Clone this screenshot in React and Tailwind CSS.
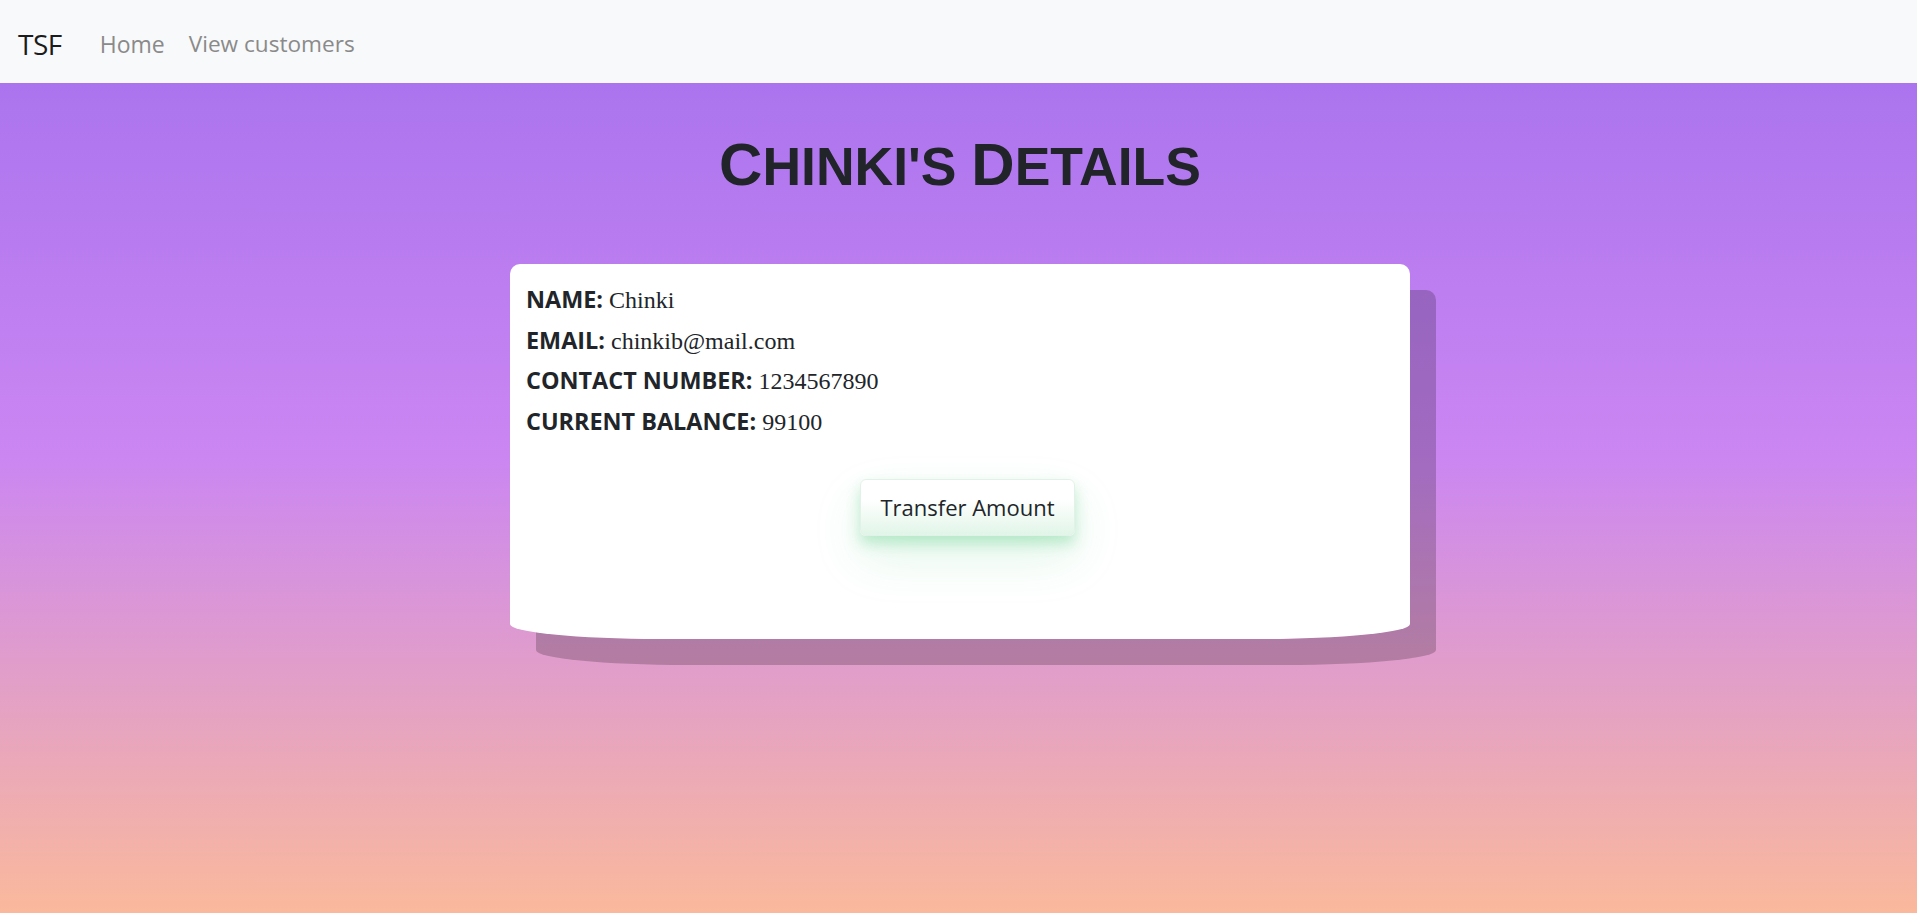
export default function App() {
  const sans = { fontFamily: '"Open Sans", "Noto Sans", sans-serif' };
  const serif = { fontFamily: '"Liberation Serif", "Times New Roman", serif' };
  return (
    <div className="w-[1917px] min-h-[913px] flex flex-col" style={sans}>
      <nav className="h-[83px] bg-[#f8f9fa] flex items-center pl-[18px] pt-[5px]">
        <span className="text-[28px] text-[#1c1c1c] tracking-[-0.5px] leading-none">TSF</span>
        <span className="ml-[38px] text-[23px] text-[#8a8a8a] leading-none">Home</span>
        <span className="ml-[24px] text-[22.6px] text-[#8a8a8a] leading-none">View customers</span>
      </nav>
      <main className="flex-1 min-h-[830px] bg-[linear-gradient(to_bottom,#ab74ee,#cb86f2_45%,#fab99c)] flex flex-col items-center">
        <h1
          className="mt-[52px] text-[60px] leading-none font-bold text-[#212529] uppercase ml-[3px]"
          style={{ fontFamily: '"Liberation Sans", Arial, sans-serif' }}
        >
          C<span className="text-[53.5px]">hinki's </span>D<span className="text-[53.5px]">etails</span>
        </h1>
        <div className="mt-[69px] ml-[3px] w-[900px] h-[375px] bg-white rounded-t-[10px] rounded-b-[150px_15px] shadow-[26px_26px_0_rgba(0,0,0,0.2)] pt-[16px] px-[16px] flex flex-col">
          <div className="text-[23.4px] leading-[39.6px] text-[#212529]">
            <div><b className="font-bold">NAME:</b> <span className="text-[24px]" style={serif}>Chinki</span></div>
            <div><b className="font-bold">EMAIL:</b> <span className="text-[24px]" style={serif}>chinkib@mail.com</span></div>
            <div><b className="font-bold">CONTACT NUMBER:</b> <span className="text-[24px]" style={serif}>1234567890</span></div>
            <div><b className="font-bold">CURRENT BALANCE:</b> <span className="text-[24px]" style={serif}>99100</span></div>
          </div>
          <div className="flex justify-center pl-[15px] mt-[37px]">
            <button className="w-[215px] h-[57px] rounded-[6px] border border-[#e3f2e8] bg-[linear-gradient(to_bottom,#ffffff_35%,#e1f5e8)] text-[22px] text-[#212529] shadow-[0_8px_14px_rgba(60,195,110,0.3),0_22px_50px_rgba(60,195,110,0.14)]">
              Transfer Amount
            </button>
          </div>
        </div>
      </main>
    </div>
  );
}
